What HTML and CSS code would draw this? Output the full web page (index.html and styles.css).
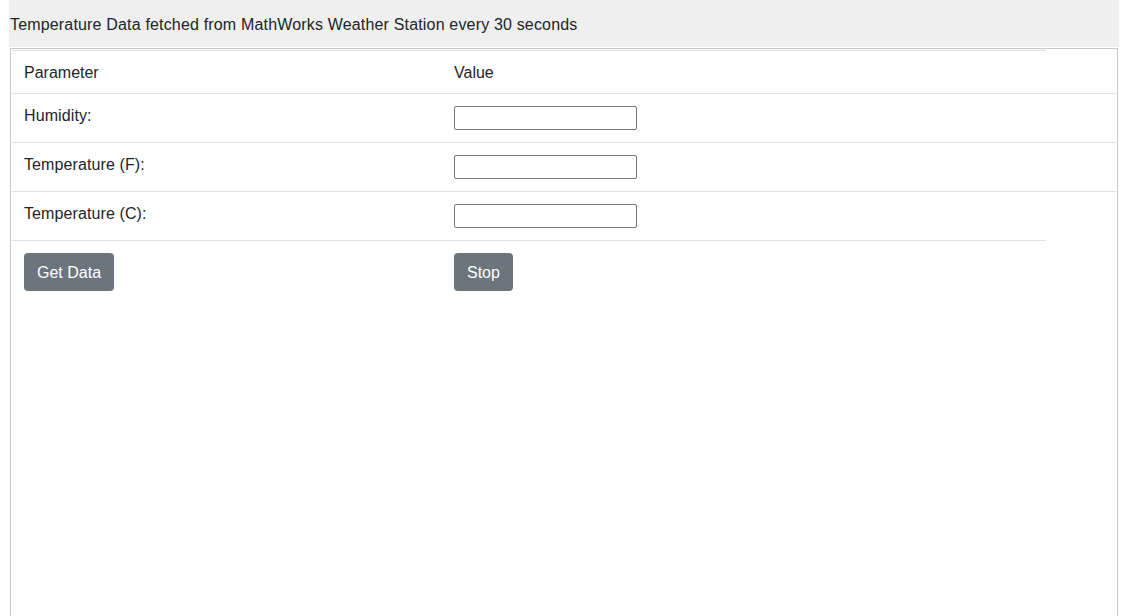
FILE: index.html
```html
<!DOCTYPE html>
<html>
<head>
<meta charset="utf-8">
<link rel="stylesheet" href="styles.css">
</head>
<body>
<div class="page">
  <div class="banner">Temperature Data fetched from MathWorks Weather Station every 30 seconds</div>
  <div class="frame">
    <div class="row head">
      <div class="cell c1">Parameter</div>
      <div class="cell">Value</div>
    </div>
    <div class="row data">
      <div class="cell c1">Humidity:</div>
      <div class="cell"><input class="field" type="text"></div>
    </div>
    <div class="row data">
      <div class="cell c1">Temperature (F):</div>
      <div class="cell"><input class="field" type="text"></div>
    </div>
    <div class="row data">
      <div class="cell c1">Temperature (C):</div>
      <div class="cell"><input class="field" type="text"></div>
    </div>
    <div class="row btns">
      <div class="cell c1"><button class="btn">Get Data</button></div>
      <div class="cell"><button class="btn">Stop</button></div>
    </div>
  </div>
</div>
</body>
</html>
```
FILE: styles.css
```css
html, body {
  margin: 0;
  padding: 0;
  background: #fff;
}
body {
  font-family: "Liberation Sans", Arial, sans-serif;
  font-size: 16px;
  color: #212529;
  overflow: hidden;
}
.page {
  margin-left: 9px;
  width: 1110px;
}
.banner {
  background: #efefef;
  height: 47px;
  padding-left: 1px;
  line-height: 50px;
  box-sizing: border-box;
  font-size: 16px;
  letter-spacing: 0.17px;
  color: #212529;
}
.frame {
  margin-top: 1px;
  margin-left: 1px;
  width: 1108px;
  height: 580px;
  box-sizing: border-box;
  border: 1px solid #c8c8c8;
  padding: 1px;
}
.row {
  display: flex;
  border-top: 1px solid #dee2e6;
  width: 1034px;
}
.row.data {
  width: 1104px;
}
.cell {
  padding: 12px;
  line-height: 24px;
  box-sizing: border-box;
}
.cell.c1 {
  width: 430px;
}
.row.head .cell {
  padding-top: 10px;
  padding-bottom: 8px;
}
.row.data .cell.c1 {
  padding-top: 10px;
  padding-bottom: 14px;
  letter-spacing: 0.1px;
}
.field {
  display: block;
  width: 183px;
  height: 24px;
  box-sizing: border-box;
  border: 1px solid #767676;
  border-radius: 2px;
  margin: 0;
  padding: 1px 2px;
  background: #fff;
}
.btn {
  display: block;
  height: 38px;
  padding: 0 13px;
  border: 0;
  border-radius: 4px;
  background: #6c757d;
  color: #fff;
  font-family: "Liberation Sans", Arial, sans-serif;
  font-size: 16px;
  line-height: 40px;
  margin: 0;
}
```
